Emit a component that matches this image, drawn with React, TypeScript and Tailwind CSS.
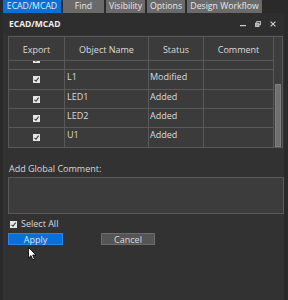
import React from 'react';

const TABS = [
  { label: 'ECAD/MCAD', w: 'w-[58px]', active: true },
  { label: 'Find', w: 'w-[41px]', active: false },
  { label: 'Visibility', w: 'w-[39px]', active: false },
  { label: 'Options', w: 'w-[38px]', active: false },
  { label: 'Design Workflow', w: 'w-[75px]', active: false },
];

const ROWS = [
  { key: 'top', name: '', status: '', h: 'h-[20px]' },
  { key: 'l1', name: 'L1', status: 'Modified', h: 'h-[20px]' },
  { key: 'led1', name: 'LED1', status: 'Added', h: 'h-[19px]' },
  { key: 'led2', name: 'LED2', status: 'Added', h: 'h-[19px]' },
  { key: 'u1', name: 'U1', status: 'Added', h: 'h-[19px]', last: true },
];

const Check: React.FC = () => (
  <svg width="7" height="7" viewBox="0 0 7 7" className="block">
    <rect x="0" y="0" width="7" height="7" fill="#e6e6e6" />
    <path d="M1.5 3.8 L3 5.2 L5.6 1.6" stroke="#3a3a3a" strokeWidth="1.1" fill="none" />
  </svg>
);

const Row: React.FC<{ r: (typeof ROWS)[number] }> = ({ r }) => (
  <div className={`flex ${r.h} ${r.last ? '' : 'border-b border-[#595959]'}`}>
    <div className="w-[56px] border-r border-[#595959] flex justify-center pt-[6px]">
      <Check />
    </div>
    <div className="w-[84px] border-r border-[#595959] pl-[2px] pt-[1px] leading-[12px]">{r.name}</div>
    <div className="w-[55px] border-r border-[#595959] pl-[1px] pt-[1px] leading-[12px]">{r.status}</div>
    <div className="w-[70px] border-r border-[#595959]" />
  </div>
);

export default function App() {
  return (
    <div
      className="relative w-[288px] h-[300px] overflow-hidden bg-[#2a2a2a] text-[#dcdcdc] flex flex-col"
      style={{ fontFamily: '"Open Sans", "Noto Sans", sans-serif' }}
    >
      {/* tabs */}
      <div className="flex h-[13px] pl-[3px] gap-[2px] text-[8.7px] leading-[13px]">
        {TABS.map((t) => (
          <div
            key={t.label}
            className={`${t.w} text-center whitespace-nowrap ${
              t.active ? 'bg-[#0b6fd4] text-[#e4eefa]' : 'bg-[#6a6a6a] text-[#e8e8e8]'
            }`}
          >
            {t.label}
          </div>
        ))}
      </div>

      {/* panel */}
      <div className="flex-1 flex flex-col ml-[3px] mr-[4px] bg-[#323232]">
        {/* title bar */}
        <div className="flex items-center h-[22px] bg-[#2e2e2e] pl-[6px] pr-[8px]">
          <span className="text-[8.5px] font-bold text-[#f0f0f0]">ECAD/MCAD</span>
          <div className="ml-auto flex items-center gap-[9px]">
            <svg width="6" height="6" viewBox="0 0 6 6">
              <rect x="0" y="4" width="6" height="1.2" fill="#d0d0d0" />
            </svg>
            <svg width="6" height="6" viewBox="0 0 6 6">
              <rect x="1.8" y="0.5" width="3.7" height="3.2" fill="none" stroke="#c8c8c8" strokeWidth="0.9" />
              <rect x="0.5" y="2.2" width="3.5" height="3.3" fill="#a8a8a8" stroke="#c8c8c8" strokeWidth="0.9" />
            </svg>
            <svg width="6" height="6" viewBox="0 0 6 6">
              <path d="M0.6 0.6 L5.4 5.4 M5.4 0.6 L0.6 5.4" stroke="#d0d0d0" strokeWidth="1.1" />
            </svg>
          </div>
        </div>

        {/* table */}
        <div className="ml-[5px] mt-[1px] w-[275px] border border-[#595959] bg-[#3b3b3b] text-[9px] flex">
          <div className="flex flex-col">
            <div className="flex h-[24px] border-b border-[#595959] text-center leading-[12px] pt-[7px]">
              <div className="w-[56px] border-r border-[#595959] -mt-[7px] pt-[7px]">Export</div>
              <div className="w-[84px] border-r border-[#595959] -mt-[7px] pt-[7px]">Object Name</div>
              <div className="w-[55px] border-r border-[#595959] -mt-[7px] pt-[7px]">Status</div>
              <div className="w-[70px] border-r border-[#595959] -mt-[7px] pt-[7px]">Comment</div>
            </div>
            <div className="h-[86px] overflow-hidden">
              <div className="-mt-[11px]">
                {ROWS.map((r) => (
                  <Row key={r.key} r={r} />
                ))}
              </div>
            </div>
          </div>
          {/* scrollbar */}
          <div className="flex-1 flex flex-col justify-end bg-[#3d3d3d] px-[1px]">
            <div className="h-[63px] bg-[#6f6f6f] border border-[#808080]" />
          </div>
        </div>

        {/* global comment */}
        <div className="ml-[6px] mt-[15px] text-[9px] leading-[12px] text-[#d8d8d8]">Add Global Comment:</div>
        <div className="ml-[5px] mt-[2px] w-[276px] h-[37px] bg-[#3c3c3c] border border-[#5a5a5a]" />

        {/* select all */}
        <div className="flex items-center ml-[7px] mt-[4px] gap-[4px] text-[9px] leading-[12px]">
          <Check />
          <span>Select All</span>
        </div>

        {/* buttons */}
        <div className="flex ml-[5px] mt-[3px] gap-[38px] text-[9px]">
          <div className="w-[55px] h-[12px] leading-[11px] text-center bg-[#0a6fd8] border border-[#2a86e6] text-[#d6e8fb]">
            Apply
          </div>
          <div className="w-[54px] h-[12px] leading-[11px] text-center bg-[#545454] border border-[#6c6c6c] text-[#dcdcdc]">
            Cancel
          </div>
        </div>
      </div>

      {/* mouse cursor */}
      <svg className="absolute left-[28px] top-[247px]" width="9" height="14" viewBox="0 0 9 14">
        <path d="M0.5 0.5 L0.5 11 L3 8.6 L4.8 12.8 L6.4 12.1 L4.7 8 L8 8 Z" fill="#ffffff" stroke="#000000" strokeWidth="0.8" />
      </svg>
    </div>
  );
}
